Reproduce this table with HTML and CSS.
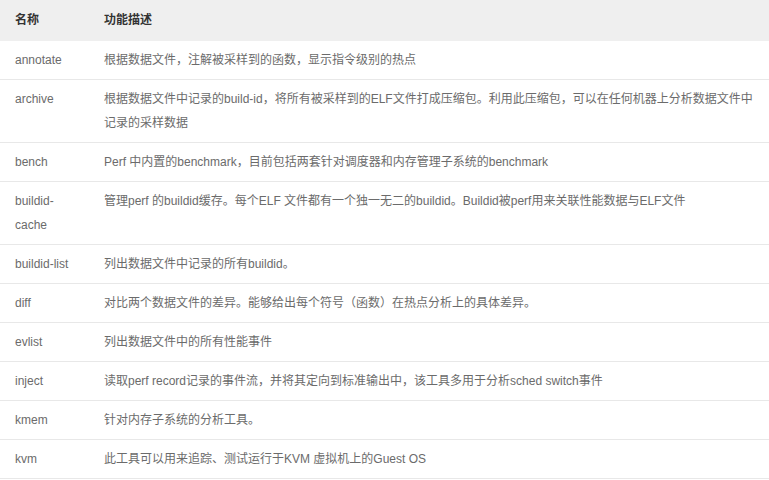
FILE: index.html
```html
<!DOCTYPE html>
<html lang="zh-CN">
<head>
    <meta charset="UTF-8">
    <meta name="viewport" content="width=device-width, initial-scale=1.0">
    <title>perf 子命令</title>
    <link rel="stylesheet" href="styles.css">
</head>
<body>
    <table class="cmd-table">
        <colgroup>
            <col class="col-name">
            <col>
        </colgroup>
        <thead>
            <tr>
                <th>名称</th>
                <th>功能描述</th>
            </tr>
        </thead>
        <tbody>
            <tr>
                <td>annotate</td>
                <td>根据数据文件，注解被采样到的函数，显示指令级别的热点</td>
            </tr>
            <tr>
                <td>archive</td>
                <td>根据数据文件中记录的build-id，将所有被采样到的ELF文件打成压缩包。利用此压缩包，可以在任何机器上分析数据文件中记录的采样数据</td>
            </tr>
            <tr>
                <td>bench</td>
                <td>Perf 中内置的benchmark，目前包括两套针对调度器和内存管理子系统的benchmark</td>
            </tr>
            <tr>
                <td>buildid-cache</td>
                <td>管理perf 的buildid缓存。每个ELF 文件都有一个独一无二的buildid。Buildid被perf用来关联性能数据与ELF文件</td>
            </tr>
            <tr>
                <td>buildid-list</td>
                <td>列出数据文件中记录的所有buildid。</td>
            </tr>
            <tr>
                <td>diff</td>
                <td>对比两个数据文件的差异。能够给出每个符号（函数）在热点分析上的具体差异。</td>
            </tr>
            <tr>
                <td>evlist</td>
                <td>列出数据文件中的所有性能事件</td>
            </tr>
            <tr>
                <td>inject</td>
                <td>读取perf record记录的事件流，并将其定向到标准输出中，该工具多用于分析sched switch事件</td>
            </tr>
            <tr>
                <td>kmem</td>
                <td>针对内存子系统的分析工具。</td>
            </tr>
            <tr>
                <td>kvm</td>
                <td>此工具可以用来追踪、测试运行于KVM 虚拟机上的Guest OS</td>
            </tr>
        </tbody>
    </table>
</body>
</html>
```

FILE: styles.css
```css
body {
    margin: 0;
    background: #fff;
    font-family: "Liberation Sans", "Noto Sans CJK SC", sans-serif;
    font-size: 12px;
    color: #6b6b6b;
}
.cmd-table {
    width: 100%;
    border-collapse: collapse;
    table-layout: fixed;
}
.col-name {
    width: 89px;
}
.cmd-table th {
    background-color: #efefef;
    color: #333;
    font-weight: bold;
    text-align: left;
    line-height: 24px;
    padding: 8px 15px 9px;
}
.cmd-table td {
    line-height: 24px;
    padding: 7px 15px;
    border-bottom: 1px solid #e8e8e8;
    vertical-align: top;
}
```
